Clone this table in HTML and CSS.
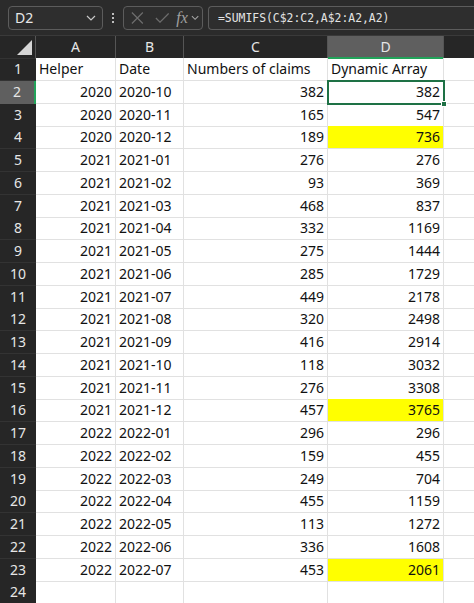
FILE: index.html
```html
<!DOCTYPE html>
<html>
<head>
<meta charset="utf-8">
<link rel="stylesheet" href="styles.css">
</head>
<body>
<div class="toolbar">
  <div class="namebox">
    <span class="nb-text">D2</span>
    <svg class="chev" width="10" height="6" viewBox="0 0 10 6"><path d="M1 1 L5 5 L9 1" fill="none" stroke="#c8c8c8" stroke-width="1.2"/></svg>
  </div>
  <div class="dots"><i></i><i></i><i></i></div>
  <div class="fxbox">
    <svg width="14" height="14" viewBox="0 0 14 14" class="ic-x"><path d="M1 1 L13 13 M13 1 L1 13" stroke="#6e6e6e" stroke-width="1.3" fill="none"/></svg>
    <svg width="16" height="12" viewBox="0 0 16 12" class="ic-check"><path d="M1 6 L5.5 10.5 L15 1" stroke="#6e6e6e" stroke-width="1.3" fill="none"/></svg>
    <span class="fx">fx</span>
    <svg class="chev2" width="9" height="6" viewBox="0 0 9 6"><path d="M1 1 L4.5 4.5 L8 1" fill="none" stroke="#a8a8a8" stroke-width="1.1"/></svg>
  </div>
  <div class="formula">=SUMIFS(C$2:C2,A$2:A2,A2)</div>
</div>

<div class="sheet">
  <div class="row hdr">
    <div class="rh corner"><span class="tri"></span></div>
    <div class="ch">A</div><div class="ch">B</div><div class="ch">C</div><div class="ch sel">D</div><div class="ch last"></div>
  </div>
  <div class="row"><div class="rh">1</div><div class="c l">Helper</div><div class="c l">Date</div><div class="c l">Numbers of claims</div><div class="c l">Dynamic Array</div><div class="c e"></div></div>
  <div class="row"><div class="rh sel">2</div><div class="c">2020</div><div class="c l">2020-10</div><div class="c">382</div><div class="c active">382<span class="handle"></span></div><div class="c e"></div></div>
  <div class="row"><div class="rh">3</div><div class="c">2020</div><div class="c l">2020-11</div><div class="c">165</div><div class="c">547</div><div class="c e"></div></div>
  <div class="row"><div class="rh">4</div><div class="c">2020</div><div class="c l">2020-12</div><div class="c">189</div><div class="c y">736</div><div class="c e"></div></div>
  <div class="row"><div class="rh">5</div><div class="c">2021</div><div class="c l">2021-01</div><div class="c">276</div><div class="c">276</div><div class="c e"></div></div>
  <div class="row"><div class="rh">6</div><div class="c">2021</div><div class="c l">2021-02</div><div class="c">93</div><div class="c">369</div><div class="c e"></div></div>
  <div class="row"><div class="rh">7</div><div class="c">2021</div><div class="c l">2021-03</div><div class="c">468</div><div class="c">837</div><div class="c e"></div></div>
  <div class="row"><div class="rh">8</div><div class="c">2021</div><div class="c l">2021-04</div><div class="c">332</div><div class="c">1169</div><div class="c e"></div></div>
  <div class="row"><div class="rh">9</div><div class="c">2021</div><div class="c l">2021-05</div><div class="c">275</div><div class="c">1444</div><div class="c e"></div></div>
  <div class="row"><div class="rh">10</div><div class="c">2021</div><div class="c l">2021-06</div><div class="c">285</div><div class="c">1729</div><div class="c e"></div></div>
  <div class="row"><div class="rh">11</div><div class="c">2021</div><div class="c l">2021-07</div><div class="c">449</div><div class="c">2178</div><div class="c e"></div></div>
  <div class="row"><div class="rh">12</div><div class="c">2021</div><div class="c l">2021-08</div><div class="c">320</div><div class="c">2498</div><div class="c e"></div></div>
  <div class="row"><div class="rh">13</div><div class="c">2021</div><div class="c l">2021-09</div><div class="c">416</div><div class="c">2914</div><div class="c e"></div></div>
  <div class="row"><div class="rh">14</div><div class="c">2021</div><div class="c l">2021-10</div><div class="c">118</div><div class="c">3032</div><div class="c e"></div></div>
  <div class="row"><div class="rh">15</div><div class="c">2021</div><div class="c l">2021-11</div><div class="c">276</div><div class="c">3308</div><div class="c e"></div></div>
  <div class="row"><div class="rh">16</div><div class="c">2021</div><div class="c l">2021-12</div><div class="c">457</div><div class="c y">3765</div><div class="c e"></div></div>
  <div class="row"><div class="rh">17</div><div class="c">2022</div><div class="c l">2022-01</div><div class="c">296</div><div class="c">296</div><div class="c e"></div></div>
  <div class="row"><div class="rh">18</div><div class="c">2022</div><div class="c l">2022-02</div><div class="c">159</div><div class="c">455</div><div class="c e"></div></div>
  <div class="row"><div class="rh">19</div><div class="c">2022</div><div class="c l">2022-03</div><div class="c">249</div><div class="c">704</div><div class="c e"></div></div>
  <div class="row"><div class="rh">20</div><div class="c">2022</div><div class="c l">2022-04</div><div class="c">455</div><div class="c">1159</div><div class="c e"></div></div>
  <div class="row"><div class="rh">21</div><div class="c">2022</div><div class="c l">2022-05</div><div class="c">113</div><div class="c">1272</div><div class="c e"></div></div>
  <div class="row"><div class="rh">22</div><div class="c">2022</div><div class="c l">2022-06</div><div class="c">336</div><div class="c">1608</div><div class="c e"></div></div>
  <div class="row"><div class="rh">23</div><div class="c">2022</div><div class="c l">2022-07</div><div class="c">453</div><div class="c y">2061</div><div class="c e"></div></div>
  <div class="row"><div class="rh">24</div><div class="c"></div><div class="c l"></div><div class="c"></div><div class="c"></div><div class="c e"></div></div>
</div>
</body>
</html>
```

FILE: styles.css
```css
* { box-sizing: border-box; }
html, body { margin: 0; padding: 0; }
body {
  width: 474px;
  height: 603px;
  overflow: hidden;
  background: #ffffff;
  font-family: "Noto Sans", "Open Sans", sans-serif;
}

.toolbar {
  height: 36px;
  background: #2b2b2b;
  border-bottom: 1px solid #3a3a3a;
  display: flex;
  align-items: center;
  padding: 0 0 0 8px;
  white-space: nowrap;
}
.namebox {
  width: 95px;
  height: 24px;
  border: 1px solid #5c5c5c;
  border-radius: 4px;
  background: #2e2e2e;
  display: flex;
  align-items: center;
  justify-content: space-between;
  padding: 0 6px 0 6px;
  flex-shrink: 0;
}
.nb-text {
  color: #e8e8e8;
  font-size: 14px;
}
.dots {
  width: 20px;
  display: flex;
  flex-direction: column;
  align-items: center;
  gap: 2px;
  flex-shrink: 0;
}
.dots i {
  width: 2px;
  height: 2px;
  background: #bdbdbd;
  display: block;
}
.fxbox {
  width: 80px;
  height: 24px;
  border: 1px solid #5c5c5c;
  border-radius: 4px;
  background: #2e2e2e;
  display: flex;
  align-items: center;
  padding: 0 3px 0 7px;
  gap: 0;
  flex-shrink: 0;
}
.ic-x { margin-right: 11px; }
.ic-check { margin-right: 7px; }
.fx {
  font-family: "Liberation Serif", serif;
  font-style: italic;
  color: #a0a0a0;
  font-size: 16px;
  margin-right: 3px;
}
.formula {
  margin-left: 5px;
  flex: 1;
  height: 24px;
  border: 1px solid #5c5c5c;
  border-right: none;
  border-radius: 4px 0 0 4px;
  background: #2e2e2e;
  color: #e4e4e4;
  font-family: "DejaVu Sans Mono", monospace;
  font-size: 11.4px;
  line-height: 22px;
  padding-left: 9px;
  overflow: hidden;
}

.sheet {
  display: flex;
  flex-direction: column;
}
.row {
  display: grid;
  grid-template-columns: 36px 80px 68px 144px 116px 30px;
  height: 22.75px;
}
.row.hdr {
  height: 22px;
  background: #262626;
}
.rh {
  background: #262626;
  color: #e6e6e6;
  font-size: 14px;
  text-align: center;
  line-height: 22px;
  border-bottom: 1px solid #333;
}
.rh.sel {
  background: #5f5f5f;
  border-right: 2px solid #22a35a;
  border-bottom: none;
}
.corner {
  position: relative;
  border-right: 1px solid #555;
}
.tri {
  position: absolute;
  right: 3px;
  bottom: 3px;
  width: 0;
  height: 0;
  border-style: solid;
  border-width: 0 0 15px 15px;
  border-color: transparent transparent #d6d6d6 transparent;
}
.ch {
  color: #e6e6e6;
  font-size: 14px;
  text-align: center;
  line-height: 22px;
  border-right: 1px solid #555;
}
.ch.sel {
  background: #5f5f5f;
  border-bottom: 2px solid #22a35a;
  line-height: 21px;
}
.ch.last { border-right: none; }

.c {
  border-right: 1px solid #e1e1e1;
  border-bottom: 1px solid #e1e1e1;
  font-size: 14px;
  color: #111;
  text-align: right;
  padding: 0 3px;
  line-height: 22px;
  white-space: nowrap;
  overflow: visible;
  position: relative;
}
.c.l { text-align: left; }
.c.y { background: #ffff00; }
.c.e { border-right: none; }
.c.active {
  outline: 2px solid #1e7145;
  outline-offset: -1px;
  z-index: 2;
}
.handle {
  position: absolute;
  right: -4px;
  bottom: -4px;
  width: 6px;
  height: 6px;
  background: #1e7145;
  border: 1px solid #fff;
}
```
